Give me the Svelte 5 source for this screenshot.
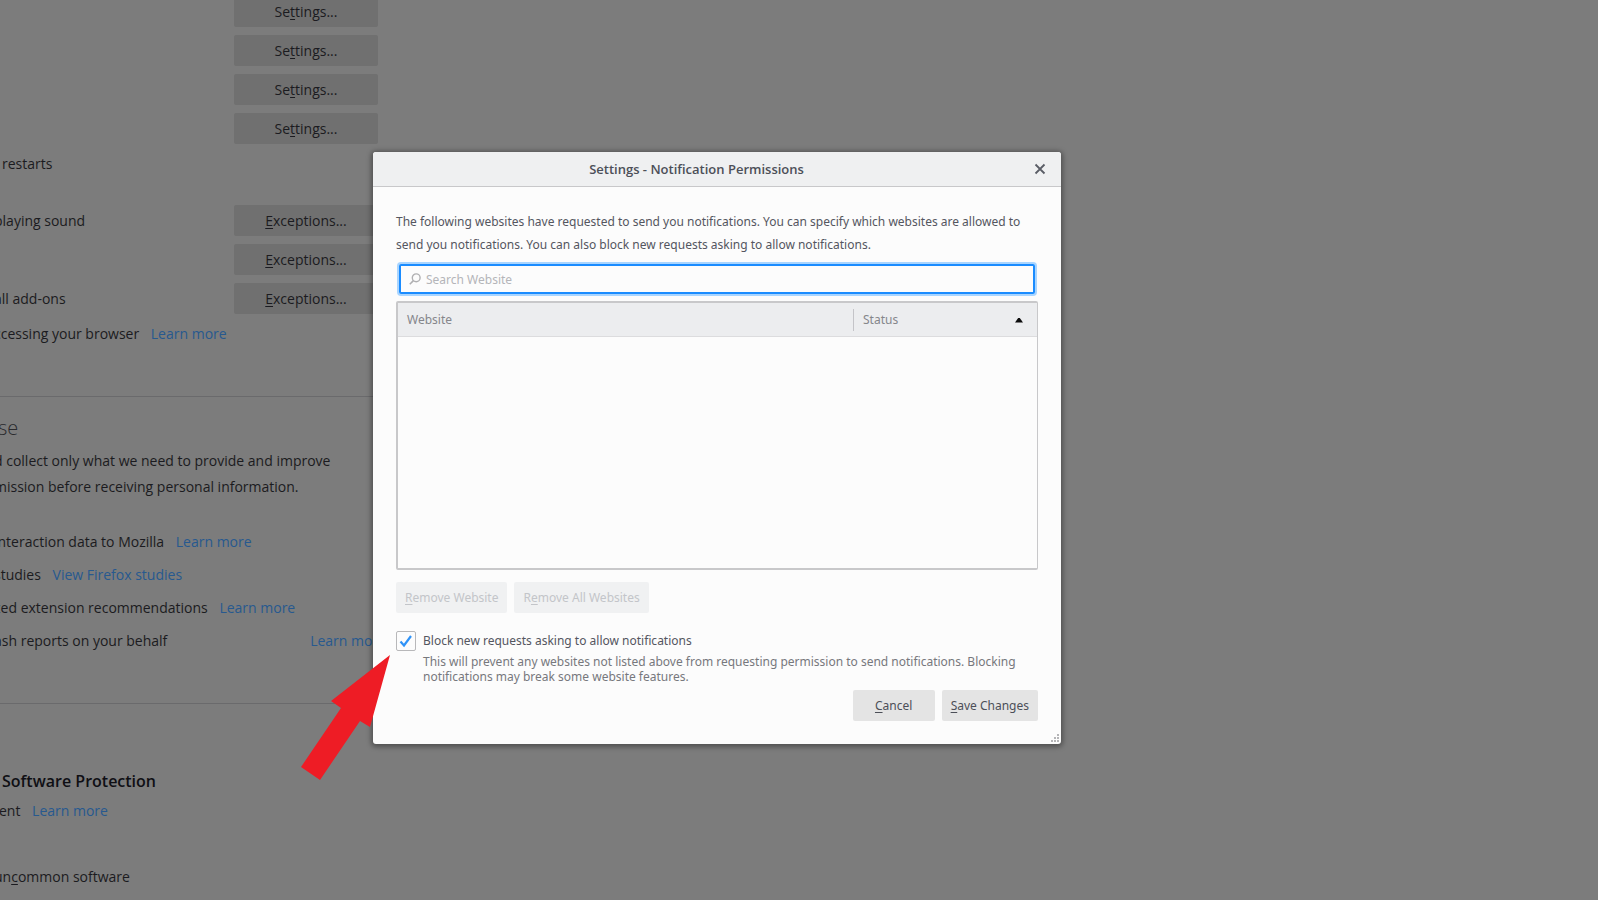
<script>
  const permissionButtons = [1, 2, 3, 4];
  const exceptionRows = ['playing sound', '', 'all add-ons'];
  const dataRows = [
    { text: 'interaction data to Mozilla', link: 'Learn more' },
    { text: 'studies', link: 'View Firefox studies' },
    { text: 'zed extension recommendations', link: 'Learn more' },
    { text: 'ash reports on your behalf', link: 'Learn more', far: true }
  ];
  let query = $state('');
  let blockNew = $state(true);
</script>

<div class="screen">
  <main class="prefs">
    <div class="rows">
      {#each permissionButtons as n (n)}
        <div class="row"><span></span><button class="pref-btn">Se<u>t</u>tings...</button></div>
      {/each}
    </div>
    <p class="restarts">restarts</p>
    <div class="rows exceptions">
      {#each exceptionRows as text}
        <div class="row"><span>{text}</span><button class="pref-btn"><u>E</u>xceptions...</button></div>
      {/each}
    </div>
    <p class="access">ccessing your browser <a href="#browser">Learn more</a></p>
    <hr />
    <h2>se</h2>
    <p class="intro">d collect only what we need to provide and improve<br />mission before receiving personal information.</p>
    <div class="data">
      {#each dataRows as row}
        <p class:far={row.far}>{row.text} <a href="#data">{row.link}</a></p>
      {/each}
    </div>
    <hr />
    <h3>Software Protection</h3>
    <p class="content">tent <a href="#content">Learn more</a></p>
    <p class="uncommon">un<u>c</u>ommon software</p>
  </main>

  <div class="dialog" role="dialog" aria-labelledby="dlg-title">
    <header>
      <h1 id="dlg-title">Settings - Notification Permissions</h1>
      <button class="close" aria-label="Close">
        <svg width="12" height="12" viewBox="0 0 12 12"><path d="M1.5 1.5l9 9M10.5 1.5l-9 9" stroke="#5a5d66" stroke-width="1.8" fill="none" /></svg>
      </button>
    </header>
    <div class="body">
      <p class="explain">The following websites have requested to send you notifications. You can specify which websites are allowed to send you notifications. You can also block new requests asking to allow notifications.</p>
      <div class="search">
        <svg width="12" height="12" viewBox="0 0 12 12"><circle cx="7.2" cy="4.8" r="3.9" fill="none" stroke="#b0b0b2" stroke-width="1.4" /><path d="M4.4 7.6L.8 11.2" stroke="#b0b0b2" stroke-width="1.6" /></svg>
        <input type="text" aria-label="Search Website" placeholder="Search Website" bind:value={query} />
      </div>
      <div class="list">
        <table>
          <thead>
            <tr>
              <th class="site">Website</th>
              <th><div class="status"><span>Status</span><svg width="10" height="6" viewBox="0 0 10 6"><path d="M1 5.5L4.2 1h1.6L9 5.5z" fill="#0c0c0d" /></svg></div></th>
            </tr>
          </thead>
        </table>
      </div>
      <div class="actions">
        <button disabled><u>R</u>emove Website</button>
        <button disabled>R<u>e</u>move All Websites</button>
      </div>
      <div class="block">
        <input id="block-new" type="checkbox" bind:checked={blockNew} />
        <label for="block-new">Block new requests asking to allow notifications</label>
        <p>This will prevent any websites not listed above from requesting permission to send notifications. Blocking notifications may break some website features.</p>
      </div>
      <div class="actions end">
        <button class="cancel"><u>C</u>ancel</button>
        <button><u>S</u>ave Changes</button>
      </div>
    </div>
    <svg class="grip" width="8" height="8" viewBox="0 0 8 8" fill="#b5b5b7"><path d="M6 0h2v2H6zM3 3h2v2H3zM6 3h2v2H6zM0 6h2v2H0zM3 6h2v2H3zM6 6h2v2H6z" /></svg>
  </div>

  <svg class="arrow" width="90" height="126" viewBox="0 0 90 126"><path d="M89 0L30 46L40 53L0 112L19 125L59 66L69 72Z" fill="#ee1c25" /></svg>
</div>

<style>
  :global(body) { background: #7c7c7c; }
  .screen {
    position: relative;
    height: 100vh;
    overflow: hidden;
    background: #7c7c7c;
    color: #1b1b20;
    font: 14px/26px "Open Sans", "Noto Sans", sans-serif;
  }
  p, h1, h2, h3 { margin: 0; }
  button, input { font: inherit; color: inherit; }
  u { text-underline-offset: 2px; }
  .prefs { width: 384px; margin: -4px 0 0 -6px; white-space: nowrap; }
  .rows { display: flex; flex-direction: column; gap: 8px; }
  .row { display: flex; justify-content: space-between; align-items: center; }
  .pref-btn {
    width: 144px;
    height: 31px;
    padding: 0;
    border: 0;
    border-radius: 2px;
    background: #707070;
  }
  .restarts { margin-top: 7px; padding-left: 8px; }
  .exceptions { margin-top: 28px; }
  .access { margin-top: 7px; }
  a { margin-left: 8px; color: #27598f; text-decoration: none; }
  hr { height: 1px; margin: 49px 0 0; border: 0; background: #6a6a6c; }
  h2 { margin-top: 18px; padding-left: 4px; font-size: 20px; font-weight: 300; color: #2a2a2e; }
  .intro { margin-top: 7px; }
  .data { display: flex; flex-direction: column; gap: 7px; margin-top: 29px; }
  .far { display: flex; justify-content: space-between; }
  .far a { margin-right: -8px; }
  h3 { margin-top: 64px; padding-left: 8px; font-size: 16px; font-weight: 600; color: #0f0f14; }
  .content { margin-top: 4px; }
  .uncommon { margin-top: 40px; }

  .dialog {
    position: absolute;
    top: 152px;
    left: 373px;
    width: 688px;
    border-radius: 3px;
    background: #fcfcfc;
    color: #54565f;
    font-family: "Noto Sans", "Open Sans", sans-serif;
    font-size: 12px;
    box-shadow: 0 1px 5px 2px rgba(0, 0, 0, .35);
  }
  header {
    display: flex;
    align-items: center;
    height: 34px;
    padding: 0 11px 0 0;
    border-bottom: 1px solid #c8c8ca;
    border-radius: 3px 3px 0 0;
    background: #eff0f1;
  }
  h1 { flex: 1; text-align: center; padding: 0 10px 0 0; font-family: "Open Sans", sans-serif; font-size: 13px; font-weight: 600; color: #4c4f58; }
  .close { display: flex; padding: 4px; border: 0; background: none; }
  .body { padding: 23px; }
  .explain { line-height: 23px; }
  .search {
    display: flex;
    align-items: center;
    gap: 5px;
    height: 30px;
    margin: 8px 3px 0;
    padding: 0 8px;
    box-sizing: border-box;
    border: 2px solid #1a8cff;
    border-radius: 2px;
    box-shadow: 0 0 0 2px #a9d5ff;
  }
  .search input { flex: 1; height: 24px; padding: 1px 0 0; border: 0; outline: 0; background: none; }
  .search input::placeholder { color: #b4b5b9; opacity: 1; }
  .list {
    height: 269px;
    margin-top: 7px;
    box-sizing: border-box;
    border: 2px solid #c8c8ca;
    border-right-width: 1px;
    border-radius: 2px;
  }
  table { width: 100%; border-collapse: collapse; table-layout: fixed; }
  tr { background: #ecedef; }
  th { height: 33px; padding: 1px 0 0; box-sizing: border-box; border-bottom: 1px solid #dcdcde; text-align: left; font-weight: 400; color: #85868b; }
  .site { width: 455px; padding-left: 9px; }
  .status { display: flex; align-items: center; justify-content: space-between; height: 22px; padding: 0 13px 0 9px; border-left: 1px solid #c4c4c8; }
  .actions { display: flex; gap: 7px; margin-top: 12px; }
  .actions button { height: 31px; padding: 0 9px; border: 0; border-radius: 2px; background: #e4e4e4; color: #4c4f58; }
  .actions button:disabled { background: #f0f1f2; color: #c3c5c9; }
  .block { display: grid; grid-template-columns: 20px 1fr; column-gap: 7px; align-items: center; margin-top: 15px; }
  .block input {
    appearance: none;
    width: 20px;
    height: 20px;
    margin: 0;
    border: 1px solid #b8b8ba;
    border-radius: 2px;
  }
  .block input:checked {
    background: url("data:image/svg+xml,%3Csvg xmlns='http://www.w3.org/2000/svg' viewBox='0 0 18 18'%3E%3Cpath d='M3.5 9.5L7 13.5L14 4' fill='none' stroke='%232f93f8' stroke-width='2.2'/%3E%3C/svg%3E") center / 18px no-repeat;
  }
  label { line-height: 26px; }
  .block p { grid-column: 2; line-height: 15px; color: #77787d; }
  .end { justify-content: flex-end; margin-top: 6px; }
  .actions .cancel { width: 82px; }
  .grip { position: absolute; right: 2px; bottom: 2px; }
  .arrow { position: absolute; left: 301px; top: 655px; }
</style>
